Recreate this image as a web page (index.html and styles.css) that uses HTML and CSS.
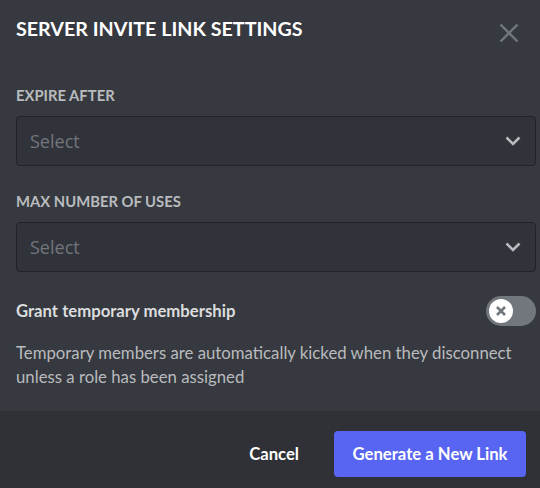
FILE: index.html
```html
<!DOCTYPE html>
<html>
<head>
<meta charset="utf-8">
<link rel="stylesheet" href="styles.css">
</head>
<body>
<div class="modal">
  <div class="header">
    <h1 class="title">SERVER INVITE LINK SETTINGS</h1>
    <button class="close" aria-label="Close">
      <svg width="20" height="20" viewBox="0 0 20 20"><path d="M1.5 1.5 L18.5 18.5 M18.5 1.5 L1.5 18.5" stroke="currentColor" stroke-width="2.4" fill="none"/></svg>
    </button>
  </div>
  <div class="content">
    <div class="field">
      <div class="label">EXPIRE AFTER</div>
      <div class="select">
        <span class="placeholder">Select</span>
        <svg class="chev" width="16" height="10" viewBox="0 0 16 10"><path d="M1.5 1.5 L8 8 L14.5 1.5" stroke="currentColor" stroke-width="2.6" fill="none"/></svg>
      </div>
    </div>
    <div class="field">
      <div class="label">MAX NUMBER OF USES</div>
      <div class="select">
        <span class="placeholder">Select</span>
        <svg class="chev" width="16" height="10" viewBox="0 0 16 10"><path d="M1.5 1.5 L8 8 L14.5 1.5" stroke="currentColor" stroke-width="2.6" fill="none"/></svg>
      </div>
    </div>
    <div class="switch-row">
      <div class="switch-label">Grant temporary membership</div>
      <div class="toggle">
        <div class="knob">
          <svg width="12" height="12" viewBox="0 0 12 12"><path d="M2 2 L10 10 M10 2 L2 10" stroke="#72767d" stroke-width="2.6" fill="none"/></svg>
        </div>
      </div>
    </div>
    <p class="desc">Temporary members are automatically kicked when they disconnect unless a role has been assigned</p>
  </div>
  <div class="footer">
    <button class="btn-cancel">Cancel</button>
    <button class="btn-primary">Generate a New Link</button>
  </div>
</div>
</body>
</html>
```
FILE: styles.css
```css
* { box-sizing: border-box; }
html, body { margin: 0; padding: 0; }
body {
  background: #36393f;
  font-family: Lato, "Open Sans", sans-serif;
  width: 540px;
  height: 488px;
  overflow: hidden;
}
.modal {
  display: flex;
  flex-direction: column;
  height: 488px;
}
.header {
  display: flex;
  justify-content: space-between;
  align-items: flex-start;
  padding: 17px 21px 0 16px;
}
.title {
  margin: 0;
  font-size: 19.7px;
  line-height: 24px;
  font-weight: 700;
  color: #ffffff;
}
.close {
  background: none;
  border: 0;
  padding: 0;
  margin-top: 6px;
  color: #72767d;
  width: 20px;
  height: 20px;
  display: flex;
}
.content {
  flex: 1;
  padding: 0 4px 0 16px;
}
.field { margin-top: 42px; }
.field + .field { margin-top: 25px; }
.label {
  font-size: 14.8px;
  line-height: 20px;
  font-weight: 700;
  color: #b9bbbe;
  margin-bottom: 11px;
}
.select {
  height: 50px;
  background: #303339;
  border: 1px solid #222327;
  border-radius: 4px;
  display: flex;
  align-items: center;
  justify-content: space-between;
  padding: 0 14px 0 13px;
}
.placeholder {
  font-family: "Open Sans", sans-serif;
  font-size: 18px;
  color: #72767d;
}
.chev { color: #b9bbbe; }
.switch-row {
  margin-top: 24px;
  display: flex;
  justify-content: space-between;
  align-items: center;
}
.switch-label {
  font-size: 16.7px;
  font-weight: 700;
  color: #dcddde;
}
.toggle {
  width: 50px;
  height: 30px;
  border-radius: 15px;
  background: #72767d;
  display: flex;
  align-items: center;
  padding-left: 3px;
}
.knob {
  width: 24px;
  height: 24px;
  border-radius: 50%;
  background: #ffffff;
  display: flex;
  align-items: center;
  justify-content: center;
}
.desc {
  margin: 15px 0 0;
  font-size: 16.75px;
  line-height: 24px;
  color: #b9bbbe;
}
.footer {
  height: 77px;
  background: #2f3136;
  display: flex;
  justify-content: flex-end;
  align-items: flex-start;
  padding: 20px 14px 0 0;
}
.btn-cancel {
  background: none;
  border: 0;
  color: #ffffff;
  font-family: Lato, sans-serif;
  font-size: 16.7px;
  font-weight: 700;
  height: 46px;
  padding: 0 35px 0 0;
}
.btn-primary {
  width: 192px;
  height: 46px;
  background: #5865f2;
  border: 0;
  border-radius: 4px;
  color: #ffffff;
  font-family: Lato, sans-serif;
  font-size: 16.7px;
  font-weight: 700;
}
```
